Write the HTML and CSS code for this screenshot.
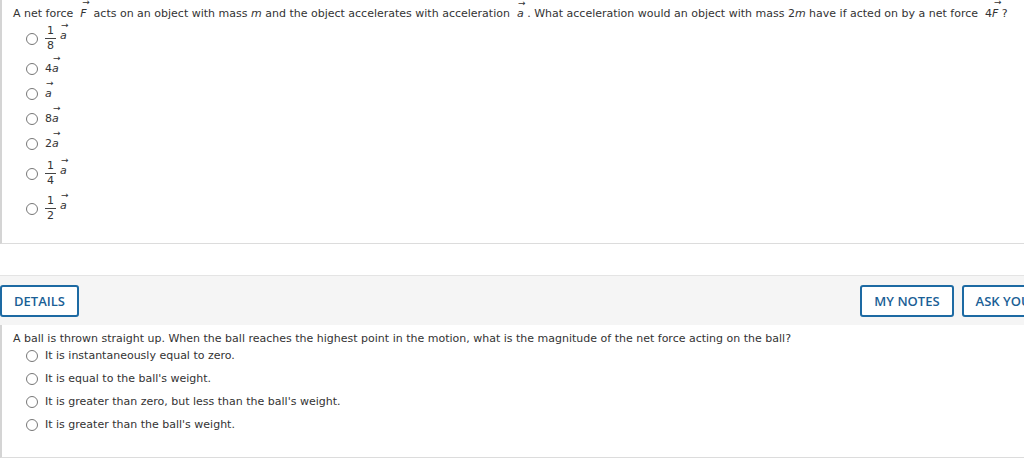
FILE: index.html
```html
<!DOCTYPE html>
<html>
<head>
<meta charset="utf-8">
<link rel="stylesheet" href="styles.css">
</head>
<body>
<div class="panel panel-top">
  <p class="question">A net force&nbsp; <span class="vec vec-cap"><i>F</i></span>&nbsp; acts on an object with mass <i>m</i> and the object accelerates with acceleration&nbsp; <span class="vec"><i>a</i></span>&nbsp;. What acceleration would an object with mass 2<i>m</i> have if acted on by a net force&nbsp; 4<span class="vec vec-cap"><i>F</i></span> ?</p>
  <ul class="options">
    <li class="opt opt-frac"><span class="radio"></span><span class="frac"><span class="num">1</span><span class="den">8</span></span><span class="vec vec-up"><i>a</i></span></li>
    <li class="opt"><span class="radio"></span>4<span class="vec"><i>a</i></span></li>
    <li class="opt"><span class="radio"></span><span class="vec"><i>a</i></span></li>
    <li class="opt"><span class="radio"></span>8<span class="vec"><i>a</i></span></li>
    <li class="opt"><span class="radio"></span>2<span class="vec"><i>a</i></span></li>
    <li class="opt opt-frac"><span class="radio"></span><span class="frac"><span class="num">1</span><span class="den">4</span></span><span class="vec vec-up"><i>a</i></span></li>
    <li class="opt opt-frac"><span class="radio"></span><span class="frac"><span class="num">1</span><span class="den">2</span></span><span class="vec vec-up"><i>a</i></span></li>
  </ul>
</div>
<div class="toolbar">
  <button class="btn">DETAILS</button>
  <div class="toolbar-right">
    <button class="btn">MY NOTES</button>
    <button class="btn">ASK YOUR TEACHER</button>
  </div>
</div>
<div class="panel panel-bottom">
  <p class="question">A ball is thrown straight up. When the ball reaches the highest point in the motion, what is the magnitude of the net force acting on the ball?</p>
  <ul class="options options-text">
    <li class="opt"><span class="radio"></span>It is instantaneously equal to zero.</li>
    <li class="opt"><span class="radio"></span>It is equal to the ball's weight.</li>
    <li class="opt"><span class="radio"></span>It is greater than zero, but less than the ball's weight.</li>
    <li class="opt"><span class="radio"></span>It is greater than the ball's weight.</li>
  </ul>
</div>
</body>
</html>
```
FILE: styles.css
```css
html, body {
  margin: 0;
  padding: 0;
  background: #fff;
  overflow: hidden;
}
body {
  font-family: "DejaVu Sans", Verdana, sans-serif;
  font-size: 11px;
  color: #333;
  width: 1024px;
}
.panel {
  border-left: 2px solid #d4d4d4;
  border-bottom: 1px solid #dcdcdc;
  padding-left: 11px;
}
.panel-top {
  padding-top: 7px;
  padding-bottom: 17px;
  margin-bottom: 31px;
}
.panel-bottom {
  padding-top: 7px;
  padding-bottom: 21px;
}
.question {
  margin: 0;
  line-height: 14px;
  height: 14px;
}
.options {
  list-style: none;
  margin: 0;
  padding: 0 0 0 13px;
}
.opt {
  display: flex;
  align-items: center;
  height: 25px;
}
.opt-frac {
  height: 35px;
}
.options-text {
  padding-left: 13px;
  margin-top: -2px;
}
.options-text .opt {
  height: 23px;
}
.radio {
  display: inline-block;
  width: 10px;
  height: 10px;
  border: 1px solid #777;
  border-radius: 50%;
  margin-right: 7px;
  flex: none;
}
.vec {
  position: relative;
  display: inline-block;
}
.vec::before {
  content: "\2192";
  position: absolute;
  left: 1px;
  top: -8px;
  font-size: 9px;
  font-style: normal;
  line-height: 9px;
}
.vec-cap::before {
  top: -9px;
  left: 2px;
}
.vec-up {
  margin-left: 4px;
  margin-bottom: 6px;
}
.frac {
  display: inline-flex;
  flex-direction: column;
  align-items: center;
  line-height: 12px;
}
.num {
  border-bottom: 1px solid #444;
  padding: 0 2px 1px;
}
.den {
  padding-top: 1px;
}
.toolbar {
  display: flex;
  align-items: center;
  background: #f5f5f5;
  border-top: 1px solid #e4e4e4;
  height: 49px;
}
.toolbar-right {
  display: flex;
  gap: 8px;
  margin-left: auto;
  margin-right: -89px;
}
.btn {
  font-family: "Open Sans", sans-serif;
  font-weight: 600;
  font-size: 13px;
  color: #1b5f96;
  background: #fff;
  border: 2px solid #1d6aa3;
  border-radius: 3px;
  height: 32px;
  padding: 0 12px;
  white-space: nowrap;
}
```
